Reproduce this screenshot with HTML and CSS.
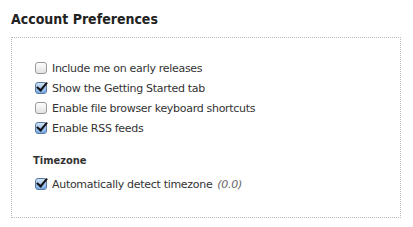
FILE: index.html
```html
<!DOCTYPE html>
<html lang="en">
<head>
	<meta charset="UTF-8">
	<title>Account Preferences</title>
	<link rel="stylesheet" href="styles.css">
</head>
<body>
	<div class="prefs">
		<h2 class="title">Account Preferences</h2>
		<div class="box">
			<label class="opt"><input type="checkbox"> Include me on early releases</label>
			<label class="opt"><input type="checkbox" checked> Show the Getting Started tab</label>
			<label class="opt"><input type="checkbox"> Enable file browser keyboard shortcuts</label>
			<label class="opt"><input type="checkbox" checked> Enable RSS feeds</label>

			<h3 class="sub">Timezone</h3>
			<label class="opt"><input type="checkbox" checked> Automatically detect timezone <em>(0.0)</em></label>
		</div>
	</div>
</body>
</html>
```

FILE: styles.css
```css
* {
	margin: 0;
	padding: 0;
	box-sizing: border-box;
}
body {
	background-color: white;
	color: #333;
	font-family: "DejaVu Sans", sans-serif;
	font-size: 11px;
	letter-spacing: -0.3px;
}

/* Layout */
.prefs {
	padding: 10px 12px 11px 11px;
}
.title {
	font-family: "DejaVu Sans Condensed", "DejaVu Sans", sans-serif;
	font-size: 14px;
	font-weight: bold;
	color: #222;
	line-height: 18px;
	letter-spacing: 0;
	margin-bottom: 9px;
}
.box {
	border: 1px dotted #bbb;
	padding: 23px 24px 26px 23px;
	display: flex;
	flex-direction: column;
	gap: 6px;
}
.opt {
	display: flex;
	align-items: center;
	gap: 5px;
	height: 14px;
}
.opt em {
	color: #666;
}
.sub {
	font-family: "DejaVu Sans Condensed", "DejaVu Sans", sans-serif;
	font-size: 11px;
	font-weight: bold;
	color: #333;
	letter-spacing: 0;
	margin: 13px 0 4px -2px;
}

/* Checkboxes */
.opt input {
	appearance: none;
	-webkit-appearance: none;
	width: 12px;
	height: 12px;
	border: 1px solid #9a9a9a;
	border-radius: 3px;
	background: linear-gradient(#fdfdfd, #e2e2e2);
	position: relative;
	flex-shrink: 0;
}
.opt input:checked {
	border-color: #5878a0;
	background: linear-gradient(#cfe3fa, #7ba9e4);
}
.opt input:checked::after {
	content: "";
	position: absolute;
	left: 3px;
	top: -3px;
	width: 4px;
	height: 9px;
	border: solid #111;
	border-width: 0 2px 2px 0;
	transform: rotate(40deg);
}
```
